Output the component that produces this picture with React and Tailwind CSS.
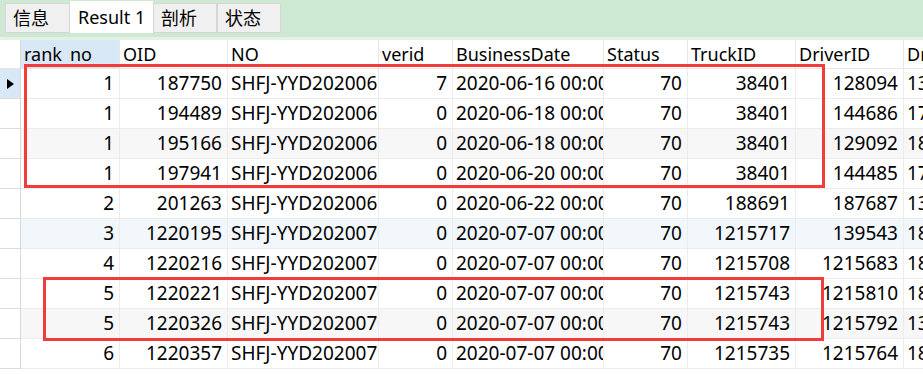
const cols = [
  { name: 'rank_no', w: 'w-[99px]', align: 'right' },
  { name: 'OID', w: 'w-[108px]', align: 'right' },
  { name: 'NO', w: 'w-[151px]', align: 'left' },
  { name: 'verid', w: 'w-[74px]', align: 'right' },
  { name: 'BusinessDate', w: 'w-[151px]', align: 'left' },
  { name: 'Status', w: 'w-[84px]', align: 'right' },
  { name: 'TruckID', w: 'w-[108px]', align: 'right' },
  { name: 'DriverID', w: 'w-[108px]', align: 'right' },
  { name: 'DriverTel', w: 'w-[120px]', align: 'left' },
];

const rows = [
  { bg: 'bg-white', cells: ['1', '187750', 'SHFJ-YYD2020061600012', '7', '2020-06-16 00:00:00', '70', '38401', '128094', '13816672215'] },
  { bg: 'bg-white', cells: ['1', '194489', 'SHFJ-YYD2020061800031', '0', '2020-06-18 00:00:00', '70', '38401', '144686', '17721036650'] },
  { bg: 'bg-[#f7f7f7]', cells: ['1', '195166', 'SHFJ-YYD2020061800057', '0', '2020-06-18 00:00:00', '70', '38401', '129092', '18017315592'] },
  { bg: 'bg-white', cells: ['1', '197941', 'SHFJ-YYD2020062000008', '0', '2020-06-20 00:00:00', '70', '38401', '144485', '17717520931'] },
  { bg: 'bg-white', cells: ['2', '201263', 'SHFJ-YYD2020062200019', '0', '2020-06-22 00:00:00', '70', '188691', '187687', '13601855219'] },
  { bg: 'bg-[#f2f7fc]', cells: ['3', '1220195', 'SHFJ-YYD2020070700044', '0', '2020-07-07 00:00:00', '70', '1215717', '139543', '18221573068'] },
  { bg: 'bg-white', cells: ['4', '1220216', 'SHFJ-YYD2020070700051', '0', '2020-07-07 00:00:00', '70', '1215708', '1215683', '18917226640'] },
  { bg: 'bg-white', cells: ['5', '1220221', 'SHFJ-YYD2020070700056', '0', '2020-07-07 00:00:00', '70', '1215743', '1215810', '18516620437'] },
  { bg: 'bg-[#f7f7f7]', cells: ['5', '1220326', 'SHFJ-YYD2020070700093', '0', '2020-07-07 00:00:00', '70', '1215743', '1215792', '13524890176'] },
  { bg: 'bg-white', cells: ['6', '1220357', 'SHFJ-YYD2020070700101', '0', '2020-07-07 00:00:00', '70', '1215735', '1215764', '18800413925'] },
];

const tabs = [
  { label: '信息', w: 'w-[65px]', active: false },
  { label: 'Result 1', w: 'w-[83px]', active: true },
  { label: '剖析', w: 'w-[64px]', active: false },
  { label: '状态', w: 'w-[64px]', active: false },
];

export default function App() {
  return (
    <div className="relative w-[923px] h-[374px] overflow-hidden bg-white text-[18px] text-black font-['Noto_Sans','Noto_Sans_CJK_SC',sans-serif]">
      {/* tab strip */}
      <div className="h-[40px] bg-[#cde8d3] flex flex-col">
        <div className="h-[33px] flex items-end pl-[5px]">
          {tabs.map((t) =>
            t.active ? (
              <div key={t.label} className={`${t.w} h-[32px] bg-white flex items-center pl-[8px] leading-none`}>
                {t.label}
              </div>
            ) : (
              <div key={t.label} className={`${t.w} h-[30px] bg-[#f0f0f0] border border-[#d6d6d6] flex items-center pl-[7px] leading-none`}>
                {t.label}
              </div>
            )
          )}
        </div>
        <div className="h-[4px] bg-[#cde8d3]" />
        <div className="h-[3px] bg-[#e4f1e7]" />
      </div>

      {/* grid */}
      <div className="flex">
        {/* row header column */}
        <div className="w-[21px] shrink-0 flex flex-col border-r border-[#d9d9d9]">
          <div className="h-[29px] bg-white border-b border-[#e6e6e6]" />
          {rows.map((r, i) => (
            <div
              key={i}
              className={`h-[30px] border-b border-[#dcdcdc] flex items-center justify-center ${i === 0 ? 'bg-[#d9e8f6]' : 'bg-white'}`}
            >
              {i === 0 && (
                <svg width="7" height="10" viewBox="0 0 7 10">
                  <path d="M0 0 L7 5 L0 10 Z" fill="#000" />
                </svg>
              )}
            </div>
          ))}
        </div>

        {cols.map((c, ci) => (
          <div key={c.name} className={`${c.w} shrink-0 flex flex-col`}>
            <div
              className={`h-[29px] border-b border-r border-[#e6e6e6] flex items-center pl-[3px] pr-[5px] overflow-hidden whitespace-nowrap ${ci === 0 ? 'bg-[#d9e8f6]' : 'bg-white'}`}
            >
              <span className="block h-[18px] leading-[18px] overflow-hidden">{c.name}</span>
            </div>
            {rows.map((r, ri) => (
              <div
                key={ri}
                className={`h-[30px] border-b border-r border-[#ececec] flex items-center pl-[3px] pr-[5px] overflow-hidden whitespace-nowrap text-[19px] ${r.bg} ${c.align === 'right' ? 'justify-end' : 'justify-start'}`}
              >
                {r.cells[ci]}
              </div>
            ))}
          </div>
        ))}
      </div>

      {/* highlight boxes drawn over the grid */}
      <div className="absolute left-[24px] top-[64px] w-[801px] h-[124px] border-[3px] border-[#f23b3b] pointer-events-none" />
      <div className="absolute left-[43px] top-[277px] w-[781px] h-[64px] border-[3px] border-[#f23b3b] pointer-events-none" />
    </div>
  );
}
